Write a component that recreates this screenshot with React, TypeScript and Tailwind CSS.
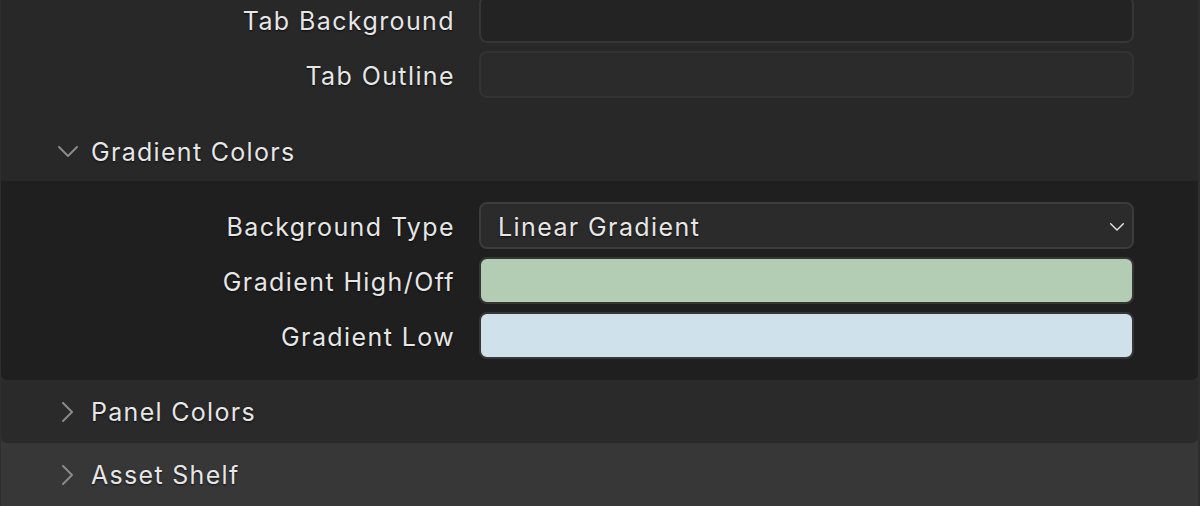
const shadow = '[text-shadow:0_1px_2px_rgba(0,0,0,0.7)]';

function ChevronDown({ className }: { className?: string }) {
  return (
    <svg viewBox="0 0 20 12" className={className} fill="none">
      <path d="M1 1 L10 10 L19 1" stroke="currentColor" strokeWidth="2" strokeLinecap="round" strokeLinejoin="round" />
    </svg>
  );
}

function ChevronRight({ className }: { className?: string }) {
  return (
    <svg viewBox="0 0 12 20" className={className} fill="none">
      <path d="M1 1 L10 10 L1 19" stroke="currentColor" strokeWidth="2" strokeLinecap="round" strokeLinejoin="round" />
    </svg>
  );
}

function Row({ label, children }: { label: string; children: React.ReactNode }) {
  return (
    <div className="flex h-[47px] items-center">
      <div className={`w-[454px] pt-[4px] text-right text-[25px] tracking-[1.4px] text-[#e6e6e6] ${shadow}`}>
        {label}
      </div>
      <div className="ml-[24px] h-full w-[655px]">{children}</div>
    </div>
  );
}

function Header({ title, open }: { title: string; open?: boolean }) {
  return (
    <div className="flex items-center">
      <div className="flex w-[90px] justify-end pr-[13px]">
        {open ? (
          <ChevronDown className="w-[20px] text-[#8a8a8a]" />
        ) : (
          <ChevronRight className="mr-[4px] h-[20px] text-[#8a8a8a]" />
        )}
      </div>
      <span className={`pt-[2px] text-[25px] tracking-[1.3px] text-[#e6e6e6] ${shadow}`}>{title}</span>
    </div>
  );
}

export default function App() {
  return (
    <div
      className="h-[506px] w-[1200px] overflow-hidden bg-[#2e2e2e] pl-[1px] pr-[2px]"
      style={{ fontFamily: 'Inter, "Noto Sans", sans-serif' }}
    >
      <div className="bg-[#282828]">
        <div className="-mt-[4px] flex flex-col gap-[8px]">
          <Row label="Tab Background">
            <div className="h-full rounded-[8px] border-2 border-[#363636] bg-[#232323]" />
          </Row>
          <Row label="Tab Outline">
            <div className="h-full rounded-[8px] border-2 border-[#333333] bg-[#2b2b2b]" />
          </Row>
        </div>
        <div className="flex h-[83px] items-center pt-[24px]">
          <Header title="Gradient Colors" open />
        </div>
      </div>

      <div className="flex flex-col gap-[8px] rounded-b-[6px] bg-[#1f1f1f] py-[21px]">
        <Row label="Background Type">
          <div className="flex h-full items-center justify-between rounded-[8px] border-2 border-[#3c3c3c] bg-[#2b2b2b] pl-[17px] pr-[8px]">
            <span className={`pt-[4px] text-[25px] tracking-[1.4px] text-[#e6e6e6] ${shadow}`}>Linear Gradient</span>
            <ChevronDown className="mt-[4px] w-[14px] text-[#e6e6e6]" />
          </div>
        </Row>
        <Row label="Gradient High/Off">
          <div className="h-full rounded-[8px] border-2 border-[#363636] bg-[#b2cdb3]" />
        </Row>
        <Row label="Gradient Low">
          <div className="h-full rounded-[8px] border-2 border-[#363636] bg-[#cfe2eb]" />
        </Row>
      </div>

      <div className="bg-[#373737]">
        <div className="flex h-[63px] items-center rounded-b-[6px] bg-[#2a2a2a]">
          <Header title="Panel Colors" />
        </div>
        <div className="flex h-[63px] items-center">
          <Header title="Asset Shelf" />
        </div>
      </div>
    </div>
  );
}
